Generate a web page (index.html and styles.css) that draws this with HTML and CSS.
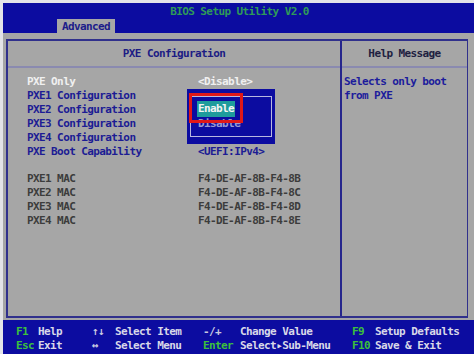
FILE: index.html
```html
<!DOCTYPE html>
<html>
<head>
<meta charset="utf-8">
<link rel="stylesheet" href="styles.css">
</head>
<body>
<div class="screen">
  <div class="header">
    <div class="title">BIOS Setup Utility V2.0</div>
    <div class="tabs"><span class="tab">Advanced</span></div>
  </div>
  <div class="main">
    <div class="panel">
      <div class="col-left">
        <div class="col-title">PXE Configuration</div>
        <div class="content">
          <div class="row"><span class="label sel">PXE Only</span><span class="value">&lt;Disable&gt;</span></div>
          <div class="row"><span class="label">PXE1 Configuration</span></div>
          <div class="row"><span class="label">PXE2 Configuration</span></div>
          <div class="row"><span class="label">PXE3 Configuration</span></div>
          <div class="row"><span class="label">PXE4 Configuration</span></div>
          <div class="row"><span class="label">PXE Boot Capability</span><span class="value">&lt;UEFI:IPv4&gt;</span></div>
          <div class="gap"></div>
          <div class="row info"><span class="label">PXE1 MAC</span><span class="value">F4-DE-AF-8B-F4-8B</span></div>
          <div class="row info"><span class="label">PXE2 MAC</span><span class="value">F4-DE-AF-8B-F4-8C</span></div>
          <div class="row info"><span class="label">PXE3 MAC</span><span class="value">F4-DE-AF-8B-F4-8D</span></div>
          <div class="row info"><span class="label">PXE4 MAC</span><span class="value">F4-DE-AF-8B-F4-8E</span></div>
        </div>
        <div class="popup">
          <div class="popup-inner"></div>
          <div class="opt opt-on">Enable</div>
          <div class="opt opt-off">Disable</div>
          <div class="redbox"></div>
        </div>
      </div>
      <div class="col-right">
        <div class="col-title help-title">Help Message</div>
        <div class="help-text">Selects only boot<br>from PXE</div>
      </div>
    </div>
  </div>
  <div class="footer">
    <span class="k">F1</span><span>Help</span><span class="arrow">↑↓</span><span>Select Item</span><span class="dim">-/+</span><span>Change Value</span><span class="k">F9</span><span>Setup Defaults</span>
    <span class="k">Esc</span><span>Exit</span><span class="arrow">↔</span><span>Select Menu</span><span class="k">Enter</span><span>Select▸Sub-Menu</span><span class="k">F10</span><span>Save &amp; Exit</span>
  </div>
</div>
</body>
</html>
```

FILE: styles.css
```css
* { box-sizing: border-box; }
html, body { margin: 0; padding: 0; }
body {
  width: 474px;
  height: 354px;
  overflow: hidden;
  background: #e4e4e8;
  font-family: "DejaVu Sans Mono", "Liberation Mono", monospace;
  font-weight: bold;
  font-size: 11px;
  letter-spacing: -0.6px;
}
.screen {
  margin: 3px 0 0 3px;
  width: 471px;
  height: 351px;
  display: flex;
  flex-direction: column;
}
.header {
  height: 30px;
  background: #0c0ca0;
  display: flex;
  flex-direction: column;
  justify-content: space-between;
}
.title {
  text-align: center;
  color: #2f9a58;
  line-height: 14px;
  padding-top: 2px;
  padding-left: 2px;
}
.tabs { padding-left: 54px; display: flex; }
.tab {
  background: #a6a6a6;
  color: #1c1c8a;
  width: 58px;
  height: 15px;
  line-height: 15px;
  text-align: center;
}
.main {
  height: 287px;
  background: #a6a6a6;
  padding: 6px 6px 2px 3px;
}
.panel {
  height: 100%;
  border: 2px solid #30308c;
  border-right-width: 1px;
  display: flex;
}
.col-left {
  width: 334px;
  border-right: 2px solid #26268c;
  position: relative;
}
.col-right { flex: 1; }
.col-title {
  height: 27px;
  line-height: 26px;
  text-align: center;
  color: #1c1c84;
  border-bottom: 2px solid #8a8ab0;
}
.help-title { color: #202040; }
.content { padding-top: 7px; }
.row {
  display: flex;
  height: 14px;
  line-height: 14px;
  color: #1c1c94;
}
.label { width: 190px; padding-left: 19px; }
.label.sel { color: #f0f0f0; }
.value { color: #1c1c94; }
.row:first-child .value { color: #f0f0f0; }
.gap { height: 13px; }
.row.info, .row.info .value { color: #3c3c3c; }
.help-text {
  padding: 7px 0 0 2px;
  line-height: 14px;
  color: #1c1c9c;
}
.popup {
  position: absolute;
  left: 179px;
  top: 48px;
  width: 88px;
  height: 55px;
  background: #0c0ca0;
}
.popup-inner {
  position: absolute;
  left: 3px;
  top: 7px;
  right: 3px;
  bottom: 7px;
  border: 1px solid #b8b8e0;
}
.opt {
  position: absolute;
  left: 11px;
  line-height: 14px;
}
.opt-on {
  top: 12px;
  left: 10px;
  width: 38px;
  height: 16px;
  line-height: 16px;
  padding-left: 1px;
  background: #1e9c9c;
  color: #f4f4f4;
}
.opt-off {
  top: 28px;
  color: #9a9ad0;
}
.redbox {
  position: absolute;
  left: 2px;
  top: 4px;
  width: 54px;
  height: 30px;
  border: 3px solid #e01818;
}
.footer {
  height: 34px;
  background: #0c0ca0;
  color: #d8d8e8;
  padding: 5px 0 0 13px;
  display: grid;
  grid-template-columns: 22px 54px 23px 88px 37px 112px 23px auto;
  grid-auto-rows: 14px;
  line-height: 14px;
}
.footer .k { color: #3cc03c; }
.footer .dim { color: #c8c8e0; }
.footer .arrow { color: #c8c8e0; }
```
